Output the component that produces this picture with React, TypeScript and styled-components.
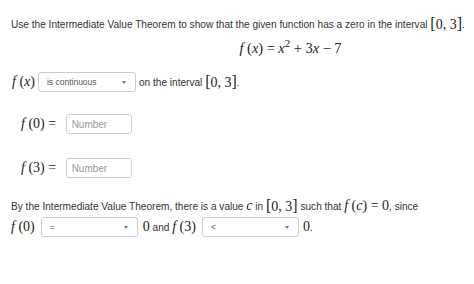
import React from 'react';
import styled, { createGlobalStyle } from 'styled-components';

const Global = createGlobalStyle`
  html, body {
    margin: 0;
    padding: 0;
    background: #fff;
  }
  body {
    font-family: "Liberation Sans", Arial, sans-serif;
    color: #333;
  }
`;

const Page = styled.div`
  width: 474px;
  height: 284px;
  padding: 14px 0 0 11px;
  box-sizing: border-box;
  font-size: 10.1px;
`;

const Line = styled.div<{ $mt?: number; $indent?: number }>`
  display: flex;
  align-items: center;
  margin-top: ${(p) => p.$mt ?? 0}px;
  padding-left: ${(p) => p.$indent ?? 0}px;
  min-height: 20px;
  white-space: nowrap;
`;

const Center = styled.div`
  text-align: center;
  padding-left: 96px;
  margin-top: 6px;
`;

const M = styled.span<{ $size?: number }>`
  font-family: "Liberation Serif", "DejaVu Serif", serif;
  font-size: ${(p) => p.$size ?? 14}px;
  color: #222;
`;

const I = styled.i`
  font-style: italic;
`;

const Op = styled.span`
  margin: 0 3.5px;
`;

const Big = styled.span`
  font-size: 16px;
`;

const Select = styled.div<{ $w: number; $ml?: number; $mr?: number }>`
  position: relative;
  box-sizing: border-box;
  width: ${(p) => p.$w}px;
  height: 20px;
  margin-left: ${(p) => p.$ml ?? 4}px;
  margin-right: ${(p) => p.$mr ?? 4}px;
  border: 1px solid #ccc;
  border-radius: 3px;
  background: #fff;
  display: flex;
  align-items: center;
  padding-left: 8px;
  font-size: 8.5px;
  color: #555;
  &::after {
    content: '';
    position: absolute;
    right: 9px;
    top: 8px;
    border-left: 2.5px solid transparent;
    border-right: 2.5px solid transparent;
    border-top: 3px solid #777;
  }
`;

const Input = styled.div`
  box-sizing: border-box;
  width: 66px;
  height: 20px;
  margin-left: 6px;
  border: 1px solid #ccc;
  border-radius: 3px;
  display: flex;
  align-items: center;
  padding-left: 5px;
  font-size: 10px;
  color: #999;
`;

const Sup = styled.sup`
  font-size: 11px;
  line-height: 0;
`;

const Interval = () => (
  <M>
    <Big>[</Big>0, 3<Big>]</Big>
  </M>
);

const App = () => (
  <>
    <Global />
    <Page>
      <Line>
        Use the Intermediate Value Theorem to show that the given function has a zero in the interval&nbsp;
        <Interval />.
      </Line>
      <Center>
        <M $size={14.5}>
          <I>f</I> (<I>x</I>)<Op>=</Op>
          <I>x</I>
          <Sup>2</Sup>
          <Op>+</Op>3<I>x</I>
          <Op>−</Op>7
        </M>
      </Center>
      <Line $mt={15} $indent={1}>
        <M>
          <I>f</I> (<I>x</I>)
        </M>
        <Select $w={98} $ml={3} $mr={3}>is continuous</Select>
        on the interval&nbsp;
        <Interval />.
      </Line>
      <Line $mt={22} $indent={10}>
        <M>
          <I>f</I> (0)<Op>=</Op>
        </M>
        <Input>Number</Input>
      </Line>
      <Line $mt={24} $indent={10}>
        <M>
          <I>f</I> (3)<Op>=</Op>
        </M>
        <Input>Number</Input>
      </Line>
      <Line $mt={18}>
        By the Intermediate Value Theorem, there is a value&nbsp;
        <M>
          <I>c</I>
        </M>
        &nbsp;in&nbsp;
        <Interval />
        &nbsp;such that&nbsp;
        <M>
          <I>f</I> (<I>c</I>)<Op>=</Op>0
        </M>
        , since
      </Line>
      <Line $mt={1}>
        <M>
          <I>f</I> (0)
        </M>
        <Select $w={97} $ml={6} $mr={5}>=</Select>
        <M>0</M>&nbsp;and&nbsp;
        <M>
          <I>f</I> (3)
        </M>
        <Select $w={97} $ml={6} $mr={4}>&lt;</Select>
        <M>0</M>.
      </Line>
    </Page>
  </>
);

export default App;
